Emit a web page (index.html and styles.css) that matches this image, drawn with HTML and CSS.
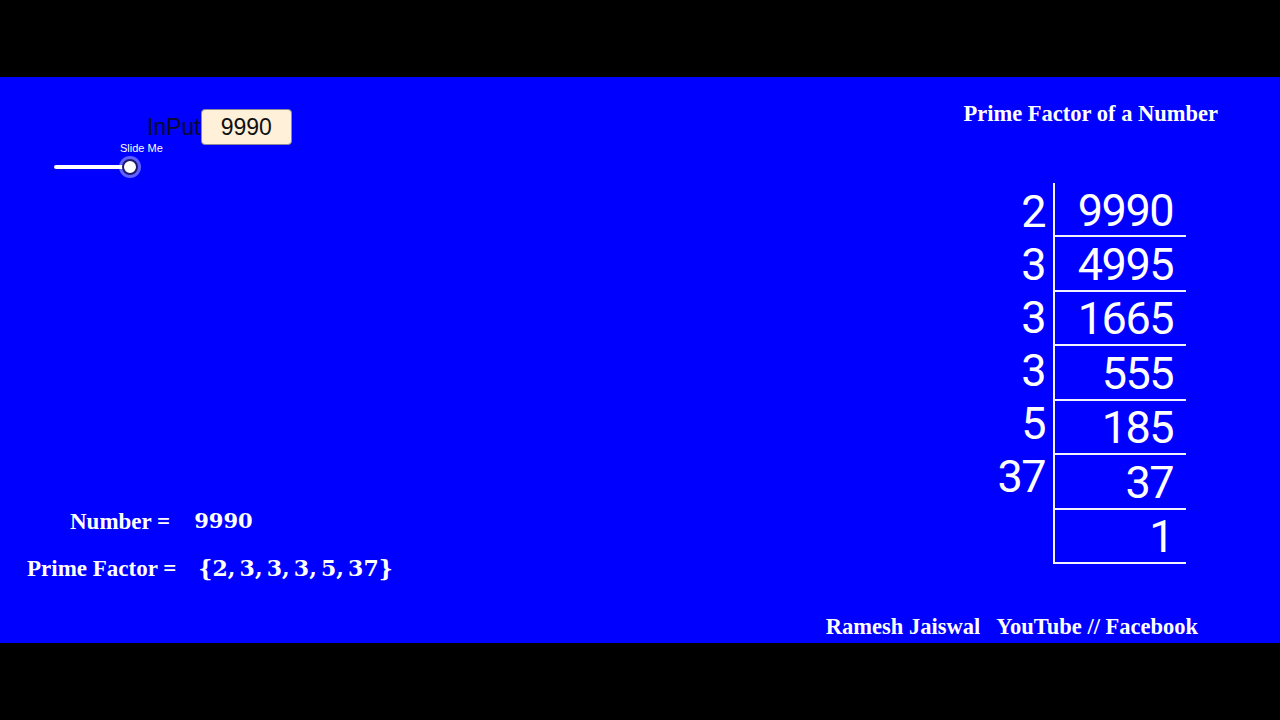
FILE: index.html
```html
<!DOCTYPE html>
<html lang="en">
<head>
<meta charset="utf-8">
<title>Prime Factor of a Number</title>
<link rel="stylesheet" href="styles.css">
</head>
<body>
<div class="screen">
  <div class="bar"></div>
  <main class="stage">
    <section class="left">
      <div class="controls">
        <div class="input-row">
          <span class="in-label">InPut</span>
          <div class="in-box">9990</div>
        </div>
        <div class="slider">
          <div class="slider-label">Slide Me</div>
          <div class="track">
            <span class="thumb"></span>
          </div>
        </div>
      </div>
      <div class="results">
        <div class="res-row row-number">
          <span class="res-label">Number =</span>
          <span class="math">9990</span>
        </div>
        <div class="res-row row-factor">
          <span class="res-label">Prime Factor =</span>
          <span class="math set">{2, 3, 3, 3, 5, 37}</span>
        </div>
      </div>
    </section>
    <section class="right">
      <h1 class="title">Prime Factor of a Number</h1>
      <div class="ladder">
        <div class="divisors">
          <div class="dv">2</div>
          <div class="dv">3</div>
          <div class="dv">3</div>
          <div class="dv">3</div>
          <div class="dv">5</div>
          <div class="dv">37</div>
        </div>
        <div class="quotients">
          <div class="qt first">9990</div>
          <div class="qt">4995</div>
          <div class="qt">1665</div>
          <div class="qt">555</div>
          <div class="qt">185</div>
          <div class="qt">37</div>
          <div class="qt">1</div>
        </div>
      </div>
      <div class="credit">Ramesh Jaiswal &nbsp; YouTube // Facebook</div>
    </section>
  </main>
  <div class="bar"></div>
</div>
</body>
</html>
```

FILE: styles.css
```css
* { box-sizing: border-box; }
html, body { margin: 0; padding: 0; background: #000; }
.screen { width: 1280px; height: 720px; display: flex; flex-direction: column; }
.bar { height: 77px; background: #000; flex: none; }
.stage {
  height: 566px;
  background: #0000ff;
  display: flex;
  justify-content: space-between;
  color: #fff;
}

/* left side */
.left {
  display: flex;
  flex-direction: column;
  justify-content: space-between;
  padding-top: 32px;
  padding-bottom: 59px;
}
.input-row {
  display: flex;
  align-items: center;
  margin-left: 147px;
  height: 36px;
}
.in-label {
  font-family: "Liberation Sans", Arial, sans-serif;
  font-size: 23px;
  color: #0a0a2a;
}
.in-box {
  width: 91px;
  height: 36px;
  background: #fff0da;
  border: 1px solid #8a8a9a;
  border-radius: 4px;
  font-family: "Liberation Sans", Arial, sans-serif;
  font-size: 23px;
  color: #111;
  display: flex;
  align-items: center;
  justify-content: center;
}
.slider { margin-left: 54px; width: 90px; margin-top: -3px; }
.slider-label {
  font-family: "Liberation Sans", Arial, sans-serif;
  font-size: 11px;
  line-height: 13px;
  padding-left: 66px;
  white-space: nowrap;
}
.track {
  position: relative;
  margin-top: 10px;
  width: 76px;
  height: 4px;
  background: #fff;
  border-radius: 2px;
}
.thumb {
  position: absolute;
  left: 65px;
  top: -9px;
  width: 22px;
  height: 22px;
  border-radius: 50%;
  background: rgba(255, 255, 255, 0.38);
  display: flex;
  align-items: center;
  justify-content: center;
}
.thumb::after {
  content: "";
  width: 12px;
  height: 12px;
  border-radius: 50%;
  background: #fff;
  border: 2px solid #1a1a6e;
}

.results { display: flex; flex-direction: column; gap: 17px; }
.res-row { display: flex; align-items: center; height: 30px; }
.res-label {
  font-family: "Liberation Serif", "Times New Roman", serif;
  font-weight: bold;
  font-size: 23px;
  white-space: nowrap;
}
.math {
  font-family: "DejaVu Serif", serif;
  font-weight: bold;
  font-size: 21px;
  white-space: nowrap;
}
.row-number { margin-left: 70px; }
.row-number .math { margin-left: 24px; margin-top: -3px; }
.row-factor { margin-left: 27px; }
.row-factor .math { margin-left: 22px; font-size: 22px; word-spacing: -3.5px; margin-top: -3px; }

/* right side */
.right {
  width: 454px;
  display: flex;
  flex-direction: column;
  align-items: flex-end;
  padding-top: 24px;
  padding-bottom: 3px;
}
.title {
  margin: 0 62px 0 0;
  font-family: "Liberation Serif", "Times New Roman", serif;
  font-weight: bold;
  font-size: 22.5px;
  line-height: 26px;
}
.ladder {
  display: flex;
  margin-top: 56px;
  margin-right: 94px;
  font-family: Roboto, "Liberation Sans", Arial, sans-serif;
  font-weight: 400;
  font-size: 45px;
  line-height: 1;
  letter-spacing: -1.5px;
}
.divisors { display: flex; flex-direction: column; padding-top: 2px; }
.dv {
  height: 53px;
  display: flex;
  align-items: center;
  justify-content: flex-end;
  padding-right: 8px;
}
.quotients {
  width: 133px;
  border-left: 2px solid #f2f2ff;
}
.qt {
  height: 54.5px;
  border-bottom: 2px solid #f2f2ff;
  display: flex;
  align-items: center;
  justify-content: flex-end;
  padding-right: 13px;
  padding-top: 2px;
}
.qt.first { height: 54px; }
.credit {
  margin: auto 82px 0 0;
  font-family: "Liberation Serif", "Times New Roman", serif;
  font-weight: bold;
  font-size: 22.5px;
  line-height: 26px;
  white-space: pre;
}
```
